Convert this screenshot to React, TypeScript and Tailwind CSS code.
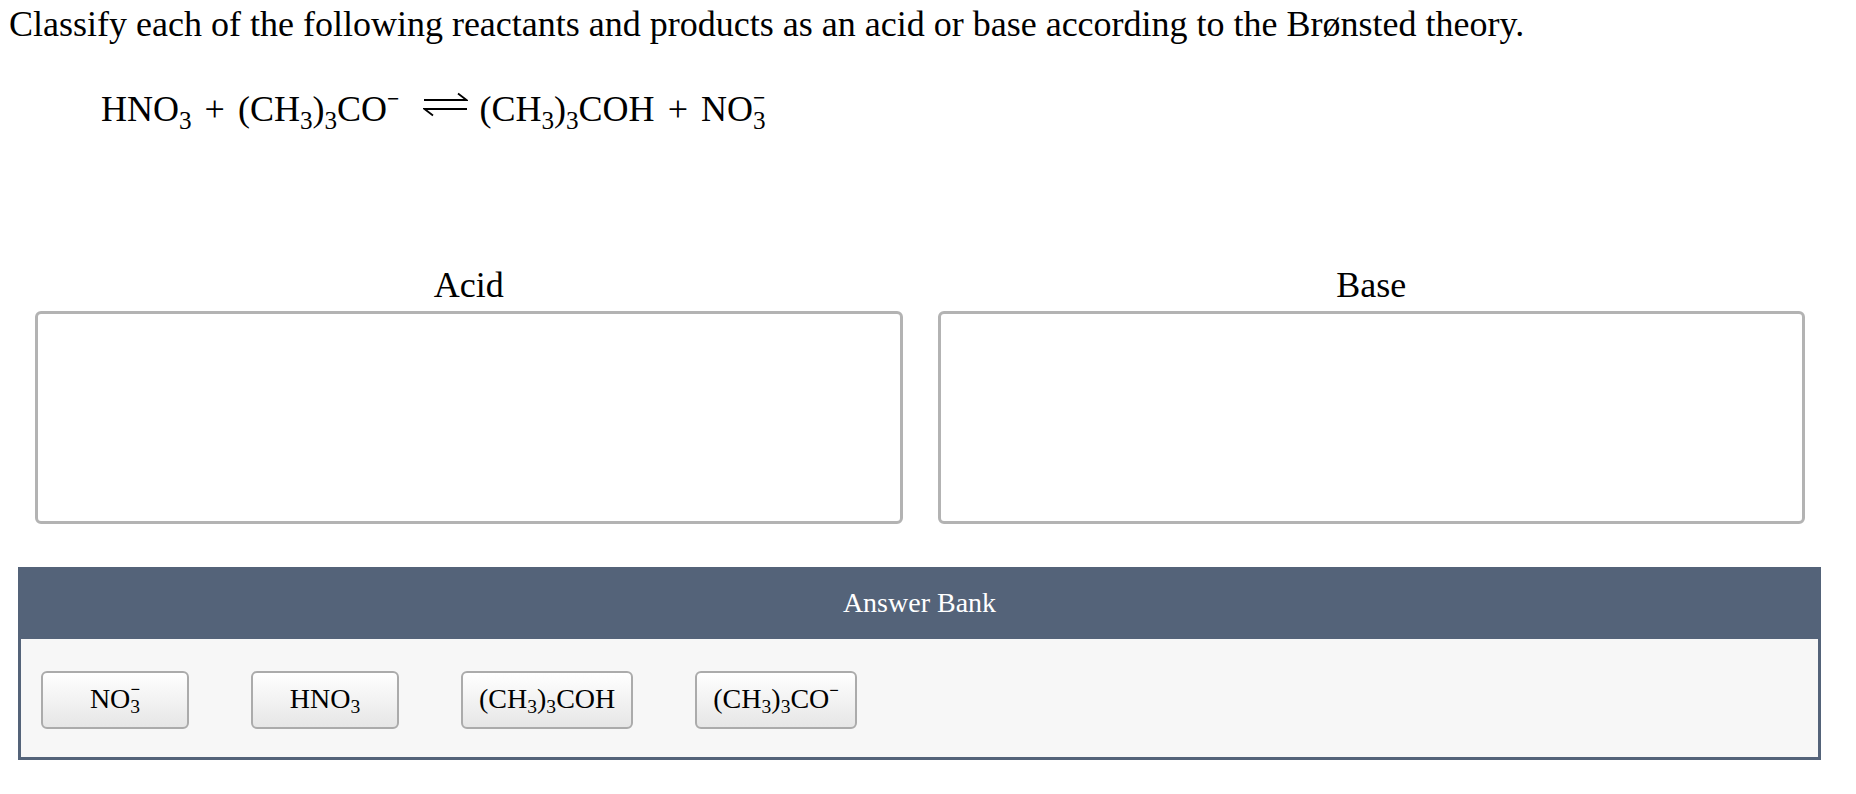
import React from "react";

// small chemistry helpers: subscript, superscript charge, and stacked sub+charge
function Sub({ children }: { children: React.ReactNode }) {
  return <span className="relative top-[0.3em] text-[0.7em] leading-none">{children}</span>;
}

function Charge() {
  return <span className="relative -top-[0.69em] text-[0.6em] font-bold leading-none">−</span>;
}

function SubCharge({ children }: { children: React.ReactNode }) {
  return (
    <span className="relative inline-block leading-none">
      <span className="relative top-[0.3em] text-[0.7em] leading-none">{children}</span>
      <span className="absolute left-0 right-0 -top-[0.15em] text-center text-[0.6em] font-bold leading-none">−</span>
    </span>
  );
}

function Plus() {
  return <span className="mx-[13px]">+</span>;
}

function Equilibrium() {
  return (
    <svg width="45" height="26" viewBox="0 0 45 26" className="ml-[24px] mr-[11px] inline-block align-[3px]">
      <path d="M1 8 H43.5 L35 1.5" fill="none" stroke="black" strokeWidth="1.8" />
      <path d="M44 17 H1.5 L10 23.5" fill="none" stroke="black" strokeWidth="1.8" />
    </svg>
  );
}

const chips: React.ReactNode[] = [
  <>NO<SubCharge>3</SubCharge></>,
  <>HNO<Sub>3</Sub></>,
  <>(CH<Sub>3</Sub>)<Sub>3</Sub>COH</>,
  <>(CH<Sub>3</Sub>)<Sub>3</Sub>CO<Charge /></>,
];

export default function App() {
  return (
    <div className="min-h-screen bg-white text-black font-['Liberation_Serif',serif]">
      {/* Question prompt */}
      <p className="pl-[9px] pt-[3px] text-[36px] leading-[43px]">
        Classify each of the following reactants and products as an acid or base according to the Brønsted theory.
      </p>

      {/* Reaction */}
      <div className="mt-[42px] h-[43px] pl-[101px] text-[36px] leading-[43px] whitespace-nowrap">
        HNO<Sub>3</Sub>
        <Plus />
        (CH<Sub>3</Sub>)<Sub>3</Sub>CO<Charge />
        <Equilibrium />
        (CH<Sub>3</Sub>)<Sub>3</Sub>COH
        <Plus />
        NO<SubCharge>3</SubCharge>
      </div>

      {/* Drop targets */}
      <div className="mt-[133px] grid grid-cols-2 gap-[35px] pl-[35px] pr-[51px]">
        {["Acid", "Base"].map((label) => (
          <div key={label} className="flex flex-col">
            <div className="text-center text-[36px] leading-[43px]">{label}</div>
            <div className="mt-[4px] h-[213px] rounded-[6px] border-[3px] border-[#b3b3b3] bg-white" />
          </div>
        ))}
      </div>

      {/* Answer bank */}
      <div className="ml-[18px] mt-[43px] w-[1803px]">
        <div className="flex h-[72px] items-center justify-center bg-[#546379] text-[28px] text-white">
          Answer Bank
        </div>
        <div className="flex h-[121px] items-center gap-[62px] border-x-[3px] border-b-[3px] border-[#546379] bg-[#f7f7f7] pl-[20px] pt-[3px]">
          {chips.map((c, i) => (
            <div
              key={i}
              className="flex h-[58px] min-w-[148px] items-center justify-center whitespace-nowrap rounded-[6px] border-2 border-[#ababab] bg-linear-to-b from-white to-[#e6e6e6] px-[16px] pb-[2px] text-[28px] leading-none"
            >
              <span>{c}</span>
            </div>
          ))}
        </div>
      </div>
    </div>
  );
}
